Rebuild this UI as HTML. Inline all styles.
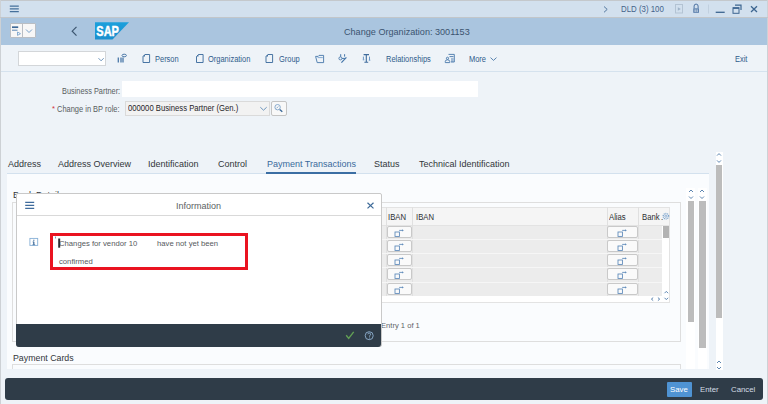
<!DOCTYPE html>
<html><head><meta charset="utf-8">
<style>
*{box-sizing:border-box;margin:0;padding:0}
html,body{width:768px;height:404px;overflow:hidden}
body{position:relative;background:#eef3f8;font-family:"Liberation Sans",sans-serif;color:#32363a}
.a{position:absolute}
.t{position:absolute;white-space:nowrap;line-height:1}
svg{position:absolute;overflow:visible;left:0;top:0}
.tb{font-size:8.3px;color:#2e5b8b;top:54.7px;transform:scaleX(0.9);transform-origin:0 0}
.tab{font-size:9px;top:160px;color:#32363a}
.th{font-size:8.4px;top:212.6px;color:#2a2e32;transform:scaleX(0.92);transform-origin:0 0}
.btn{position:absolute;width:25px;height:12px;background:#fafafa;border:1px solid #c9c9c9;border-radius:2px}
</style></head><body>
<!-- outer borders -->
<div class="a" style="left:0;top:0;width:768px;height:1px;background:#c4c8cc"></div>
<div class="a" style="left:0;top:0;width:1px;height:404px;background:#cdd1d5"></div>
<div class="a" style="right:0;top:0;width:1px;height:404px;background:#cdd1d5"></div>

<!-- top bar -->
<div class="a" style="left:1px;top:1px;width:766px;height:16px;background:#d2e0ee"></div>
<div class="a" style="left:0;top:17px;width:768px;height:1px;background:#c2c6ca"></div>
<div class="t" style="left:621px;top:5.4px;font-size:8.7px;color:#45638a;transform:scaleX(0.905);transform-origin:0 0">DLD (3) 100</div>

<!-- header -->
<div class="a" style="left:1px;top:18px;width:766px;height:27px;background:#aac5df"></div>
<div class="a" style="left:10px;top:23px;width:26px;height:15.3px;background:#f7f7f7;border:1px solid #b9bec4;border-radius:1px"></div>
<div class="a" style="left:22px;top:23px;width:1px;height:15.3px;background:#b9bec4"></div>
<div class="t" style="left:344px;top:27.5px;font-size:9.1px;color:#3b5470">Change Organization: 3001153</div>

<!-- toolbar -->
<div class="a" style="left:1px;top:45px;width:766px;height:27px;background:#eef3f8"></div>
<div class="a" style="left:1px;top:71px;width:766px;height:1px;background:#d5e2ee"></div>
<div class="a" style="left:18px;top:51px;width:88px;height:15px;background:#fff;border:1px solid #d3d6d9"></div>

<div class="t tb" style="left:155px">Person</div>
<div class="t tb" style="left:208px">Organization</div>
<div class="t tb" style="left:279px">Group</div>
<div class="t tb" style="left:386px">Relationships</div>
<div class="t tb" style="left:469px">More</div>
<div class="t tb" style="left:735px">Exit</div>

<!-- form -->
<div class="t" style="left:62px;top:87.7px;font-size:8.2px;color:#585c60;transform:scaleX(0.9);transform-origin:0 0">Business Partner:</div>
<div class="a" style="left:122px;top:81px;width:356px;height:16px;background:#fff"></div>
<div class="t" style="left:52px;top:105.3px;font-size:7.5px;color:#d0303a">*</div>
<div class="t" style="left:57px;top:105.1px;font-size:8.3px;color:#585c60;transform:scaleX(0.9);transform-origin:0 0">Change in BP role:</div>
<div class="a" style="left:125px;top:101px;width:145px;height:14.5px;background:#f2f2f2;border:1px solid #dadada"></div>
<div class="t" style="left:127.5px;top:104.2px;font-size:8.6px;color:#1f2327;transform:scaleX(0.895);transform-origin:0 0">000000 Business Partner (Gen.)</div>
<div class="a" style="left:271px;top:100.5px;width:16px;height:15.5px;background:#f8f8f8;border:1px solid #c4c4c4;border-radius:2px"></div>

<!-- tabs -->
<div class="t tab" style="left:8px">Address</div>
<div class="t tab" style="left:58px">Address Overview</div>
<div class="t tab" style="left:148px">Identification</div>
<div class="t tab" style="left:218px">Control</div>
<div class="t tab" style="left:267px;color:#3a6a9c">Payment Transactions</div>
<div class="t tab" style="left:374px">Status</div>
<div class="t tab" style="left:419px">Technical Identification</div>
<div class="a" style="left:7px;top:173px;width:702px;height:1px;background:#d3e1ee"></div>
<div class="a" style="left:266px;top:172px;width:90px;height:2px;background:#3b6ea3"></div>

<!-- content -->
<div class="a" style="left:7px;top:174px;width:702px;height:195px;background:#fafcfe"></div>
<div class="t" style="left:13px;top:191px;font-size:9px">Bank Details</div>
<div class="a" style="left:12px;top:202px;width:669px;height:140px;border:1px solid #dedede"></div>

<!-- table -->
<div class="a" style="left:381px;top:207px;width:289px;height:95.5px;background:#fff;border:1px solid #e3e3e3"></div>
<div class="a" style="left:381px;top:207px;width:289px;height:19px;background:#f5f5f5;border:1px solid #e3e3e3"></div>
<div class="a" style="left:382px;top:226px;width:280px;height:70px;background:#ececec"></div>
<div class="a" style="left:386px;top:207px;width:1px;height:89px;background:#e0e0e0"></div>
<div class="a" style="left:412px;top:207px;width:1px;height:89px;background:#e0e0e0"></div>
<div class="a" style="left:607px;top:207px;width:1px;height:89px;background:#e0e0e0"></div>
<div class="a" style="left:638px;top:207px;width:1px;height:89px;background:#e0e0e0"></div>
<div class="a" style="left:382px;top:239px;width:280px;height:1px;background:#f6f6f6"></div>
<div class="a" style="left:382px;top:253px;width:280px;height:1px;background:#f6f6f6"></div>
<div class="a" style="left:382px;top:267px;width:280px;height:1px;background:#f6f6f6"></div>
<div class="a" style="left:382px;top:282px;width:280px;height:1px;background:#f6f6f6"></div>
<div class="a" style="left:662px;top:226px;width:7px;height:69px;background:#fff"></div>
<div class="a" style="left:663px;top:226px;width:6px;height:12px;background:#b3b3b3"></div>
<div class="t th" style="left:388px">IBAN</div>
<div class="t th" style="left:416px">IBAN</div>
<div class="t th" style="left:608.5px">Alias</div>
<div class="t th" style="left:642px">Bank</div><div class="t th" style="left:660.6px">.</div>
<div class="btn" style="left:387px;top:226px"></div>
<div class="btn" style="left:607px;top:226px;width:31px"></div>
<div class="btn" style="left:387px;top:240px"></div>
<div class="btn" style="left:607px;top:240px;width:31px"></div>
<div class="btn" style="left:387px;top:254px"></div>
<div class="btn" style="left:607px;top:254px;width:31px"></div>
<div class="btn" style="left:387px;top:268px"></div>
<div class="btn" style="left:607px;top:268px;width:31px"></div>
<div class="btn" style="left:387px;top:283px"></div>
<div class="btn" style="left:607px;top:283px;width:31px"></div>


<div class="t" style="left:381px;top:321.5px;font-size:7.6px;color:#5f6367">Entry 1 of 1</div>
<div class="t" style="left:13px;top:353.7px;font-size:8.8px">Payment Cards</div>
<div class="a" style="left:12px;top:364px;width:669px;height:5px;border-top:1px solid #dedede;border-left:1px solid #dedede;border-right:1px solid #dedede"></div>

<!-- scrollbars -->
<div class="a" style="left:686px;top:188px;width:9px;height:181px;background:#fff"></div>
<div class="a" style="left:698px;top:188px;width:9px;height:181px;background:#fff"></div>
<div class="a" style="left:687.7px;top:201.2px;width:6.5px;height:121px;background:#bcbcbc"></div>
<div class="a" style="left:699px;top:201.2px;width:6.6px;height:147px;background:#bcbcbc"></div>
<div class="a" style="left:716px;top:151.5px;width:6.5px;height:218.5px;background:#fff"></div>
<div class="a" style="left:716px;top:165.2px;width:6.3px;height:153px;background:#bcbcbc"></div>

<!-- dialog -->
<div class="a" style="left:16px;top:193px;width:365.5px;height:154px;background:#fff;border:1px solid #c9c9c9;border-radius:2px"></div>
<div class="a" style="left:17px;top:215px;width:364px;height:1px;background:#d9d9d9"></div>
<div class="t" style="left:176px;top:201.5px;font-size:9px;color:#5b5f63">Information</div>
<div class="a" style="left:50px;top:233px;width:198px;height:36.5px;border:3px solid #ea1320"></div>
<div class="t" style="left:59px;top:240.3px;font-size:7.7px;color:#55595d">Changes for vendor 10</div>
<div class="t" style="left:157px;top:240.3px;font-size:7.7px;color:#55595d">have not yet been</div>
<div class="t" style="left:59px;top:258.3px;font-size:7.7px;color:#55595d">confirmed</div>
<div class="a" style="left:16px;top:324px;width:365.3px;height:22.5px;background:#2f3c48;border-radius:0 0 3px 3px"></div>

<!-- footer -->
<div class="a" style="left:5px;top:378.3px;width:757.7px;height:21.6px;background:#2f3c48;border-radius:3px"></div>
<div class="a" style="left:667px;top:382px;width:25px;height:15px;background:#4f93d3;border-radius:1px"></div>
<div class="t" style="left:670px;top:386px;font-size:7.8px;color:#fff">Save</div>
<div class="t" style="left:700px;top:386px;font-size:7.8px;color:#d5dde5">Enter</div>
<div class="t" style="left:731px;top:386px;font-size:7.8px;color:#d5dde5">Cancel</div>

<!-- icons -->
<svg width="768" height="404" viewBox="0 0 768 404">
 <g fill="none" stroke-linecap="butt">
  <!-- hamburger top -->
  <path d="M9.8 6.1h9M9.8 8.9h9M9.8 11.7h9" stroke="#46709b" stroke-width="1.25"/>
  <!-- header left icon -->
  <path d="M12 27.2h6.2" stroke="#3f6a98" stroke-width="1.7"/><path d="M12 30.2h5.5" stroke="#5a86b3" stroke-width="1"/>
  <path d="M17.5 32l3 1.7-3 1.7z" stroke="#6d9ac8" stroke-width="0.8"/>
  <path d="M26 29.5l3 3 3-3" stroke="#6a95c2" stroke-width="0.9"/>
  <!-- back arrow -->
  <path d="M76.5 26.8l-4.3 4.4 4.3 4.4" stroke="#3c5670" stroke-width="1.2"/>
  <!-- chevron > top -->
  <path d="M604 6.5l3.2 2.9-3.2 2.9" stroke="#5579a0" stroke-width="1"/>
  <!-- play box -->
  <rect x="675.5" y="4.5" width="7" height="8.5" stroke="#b3c3d3" stroke-width="1"/>
  <path d="M677.8 7.3l3 1.7-3 1.7z" fill="#9fb3c8" stroke="none"/>
  <!-- lock -->
  <path d="M694.1 8.5v-2.4a2 2 0 0 1 4 0v2.4" stroke="#4a70a0" stroke-width="1"/>
  <rect x="693.3" y="8.4" width="5.6" height="4.4" fill="#4f76a6"/>
  <path d="M695.1 9.3v2.8M697.1 9.3v2.8" stroke="#f2f6fa" stroke-width="0.9"/>
  <path d="M708.5 4.5v9" stroke="#bccbda" stroke-width="0.8"/>
  <!-- minimize -->
  <path d="M715.7 12.3h9" stroke="#3d6590" stroke-width="1.3"/>
  <!-- restore -->
  <path d="M735 5.2h6v4.8" stroke="#3d6590" stroke-width="1.2"/>
  <rect x="733" y="7.7" width="6" height="5.6" stroke="#3d6590" stroke-width="1"/>
  <path d="M733 8.2h6" stroke="#3d6590" stroke-width="1.4"/>
  <!-- close -->
  <path d="M751 6.2l6 5.8M757 6.2l-6 5.8" stroke="#3d6590" stroke-width="1.3"/>

  <!-- dropdown chevron -->
  <path d="M98.5 58.2l2.6 2.6 2.6-2.6" stroke="#5f8ab5" stroke-width="0.9"/>
  <!-- toolbar icon1 -->
  <path d="M118.3 57.5v5M121 57.5v5M123 57.5v5" stroke="#4b78a8" stroke-width="1.3"/>
  <ellipse cx="124.2" cy="55.5" rx="2.2" ry="1.3" stroke="#4b78a8" stroke-width="1"/>
  <!-- doc icons -->
  <path d="M145 54.5h4.6v8h-6.6v-6z" stroke="#3f6e9f" stroke-width="0.95"/><path d="M142.8 56.5l2.2-2.2v2.2z" fill="#3f6e9f"/>
  <path d="M198.5 54.5h4.6v8h-6.6v-6z" stroke="#3f6e9f" stroke-width="0.95"/><path d="M196.3 56.5l2.2-2.2v2.2z" fill="#3f6e9f"/>
  <path d="M268 54.5h4.6v8h-6.6v-6z" stroke="#3f6e9f" stroke-width="0.95"/><path d="M265.8 56.5l2.2-2.2v2.2z" fill="#3f6e9f"/>
  <!-- folder -->
  <path d="M315.6 56.4h2.6l0.8-1h4.6v7.2h-6.4z" stroke="#4677aa" stroke-width="0.9"/>
  <path d="M317.6 57.6h5.2" stroke="#6a98c8" stroke-width="0.8"/>
  <!-- wrench-ish -->
  <circle cx="340.4" cy="58.4" r="1.5" stroke="#4677aa" stroke-width="0.9"/>
  <path d="M340.7 54.2v2.6M344.6 54.2v2.4M342 58.4h3.2" stroke="#4677aa" stroke-width="1"/>
  <path d="M346.4 57.4l-5 5.2" stroke="#4677aa" stroke-width="1.2"/>
  <!-- scale -->
  <path d="M366.3 54.4v7.8M363.6 54.6h5.4M364.4 62.2h3.8" stroke="#3f6b9c" stroke-width="1.1"/>
  <path d="M363.4 56.6v3M369.5 56.6v3.4M362.8 59.8h1.5M368.8 60.2h1.5" stroke="#6a98c8" stroke-width="1"/>
  <!-- relationships icon -->
  <path d="M448.5 54.4h5.8v7.6h-3.4" stroke="#4677aa" stroke-width="0.9"/>
  <path d="M449.5 56.6h4M451 59h2.6M451 61h2.6" stroke="#4677aa" stroke-width="0.9"/>
  <circle cx="447.5" cy="58.3" r="1.1" stroke="#4677aa" stroke-width="0.9"/>
  <path d="M445.3 62.6v-1.2a2.2 1.6 0 0 1 4.4 0v1.2z" stroke="#4677aa" stroke-width="0.9"/>
  <!-- more chevron -->
  <path d="M490.5 57.6l3 2.8 3-2.8" stroke="#4b78a8" stroke-width="0.9"/>

  <!-- select chevron -->
  <path d="M260.3 107.2l3.2 3 3.2-3" stroke="#5f8ab5" stroke-width="0.9"/>
  <!-- magnifier -->
  <circle cx="277.6" cy="107.2" r="2.7" stroke="#7da3c9" stroke-width="0.9"/><path d="M276.5 108.3l1.8-1.8" stroke="#5a86b3" stroke-width="0.7"/>
  <path d="M279.7 109.4l2.6 2.4" stroke="#3a6898" stroke-width="1.3"/>

  <!-- dialog hamburger -->
  <path d="M25.2 202.4h9M25.2 205.4h9M25.2 208.4h9" stroke="#3f6b9c" stroke-width="1.1"/>
  <!-- dialog close -->
  <path d="M367.5 202.8l6 5.6M373.5 202.8l-6 5.6" stroke="#3d6a98" stroke-width="1.2"/>
  <!-- info icon -->
  <rect x="29.9" y="238.4" width="7.8" height="7" stroke="#86afd6" stroke-width="0.9"/>
  <path d="M33.8 239.8v1M33.8 241.8v3" stroke="#3a6898" stroke-width="1.2"/><path d="M32.6 241.9h1.4M32.5 244.7h2.6" stroke="#3a6898" stroke-width="0.7"/>
  <!-- cursor -->
  <path d="M59.2 238.5v9.2" stroke="#2a2e33" stroke-width="2"/><path d="M55.5 236.5v2" stroke="#5a86b3" stroke-width="0.8"/>
  <!-- check -->
  <path d="M346.2 335.2l2.5 3.2 5-6.6" stroke="#62a055" stroke-width="1.4"/>
  <!-- help -->
  <circle cx="369.2" cy="335.7" r="4" stroke="#8fb0d0" stroke-width="0.9"/>
  <path d="M367.9 334.3a1.35 1.35 0 1 1 1.7 1.4v1" stroke="#8fb0d0" stroke-width="0.9"/>
  <path d="M369.5 337.6v0.9" stroke="#8fb0d0" stroke-width="0.9"/>

  <rect x="395.0" y="232.0" width="4.4" height="4.4" stroke="#5a87b8" stroke-width="0.85"/>
<path d="M399.2 230.4h3.2" stroke="#4f7fb3" stroke-width="0.8"/><path d="M402.2 229.2l1.5 1.2-1.5 1.2z" fill="#4f7fb3"/>
<rect x="618.0" y="232.0" width="4.4" height="4.4" stroke="#5a87b8" stroke-width="0.85"/>
<path d="M622.2 230.4h3.2" stroke="#4f7fb3" stroke-width="0.8"/><path d="M625.2 229.2l1.5 1.2-1.5 1.2z" fill="#4f7fb3"/>
<rect x="395.0" y="246.0" width="4.4" height="4.4" stroke="#5a87b8" stroke-width="0.85"/>
<path d="M399.2 244.4h3.2" stroke="#4f7fb3" stroke-width="0.8"/><path d="M402.2 243.2l1.5 1.2-1.5 1.2z" fill="#4f7fb3"/>
<rect x="618.0" y="246.0" width="4.4" height="4.4" stroke="#5a87b8" stroke-width="0.85"/>
<path d="M622.2 244.4h3.2" stroke="#4f7fb3" stroke-width="0.8"/><path d="M625.2 243.2l1.5 1.2-1.5 1.2z" fill="#4f7fb3"/>
<rect x="395.0" y="260.0" width="4.4" height="4.4" stroke="#5a87b8" stroke-width="0.85"/>
<path d="M399.2 258.4h3.2" stroke="#4f7fb3" stroke-width="0.8"/><path d="M402.2 257.2l1.5 1.2-1.5 1.2z" fill="#4f7fb3"/>
<rect x="618.0" y="260.0" width="4.4" height="4.4" stroke="#5a87b8" stroke-width="0.85"/>
<path d="M622.2 258.4h3.2" stroke="#4f7fb3" stroke-width="0.8"/><path d="M625.2 257.2l1.5 1.2-1.5 1.2z" fill="#4f7fb3"/>
<rect x="395.0" y="274.0" width="4.4" height="4.4" stroke="#5a87b8" stroke-width="0.85"/>
<path d="M399.2 272.4h3.2" stroke="#4f7fb3" stroke-width="0.8"/><path d="M402.2 271.2l1.5 1.2-1.5 1.2z" fill="#4f7fb3"/>
<rect x="618.0" y="274.0" width="4.4" height="4.4" stroke="#5a87b8" stroke-width="0.85"/>
<path d="M622.2 272.4h3.2" stroke="#4f7fb3" stroke-width="0.8"/><path d="M625.2 271.2l1.5 1.2-1.5 1.2z" fill="#4f7fb3"/>
<rect x="395.0" y="289.0" width="4.4" height="4.4" stroke="#5a87b8" stroke-width="0.85"/>
<path d="M399.2 287.4h3.2" stroke="#4f7fb3" stroke-width="0.8"/><path d="M402.2 286.2l1.5 1.2-1.5 1.2z" fill="#4f7fb3"/>
<rect x="618.0" y="289.0" width="4.4" height="4.4" stroke="#5a87b8" stroke-width="0.85"/>
<path d="M622.2 287.4h3.2" stroke="#4f7fb3" stroke-width="0.8"/><path d="M625.2 286.2l1.5 1.2-1.5 1.2z" fill="#4f7fb3"/>
<!-- table small scroll arrows -->
  <path d="M653.2 297.6l-1.8 1.5 1.8 1.5M657.9 297.6l1.8 1.5-1.8 1.5" stroke="#4b78a8" stroke-width="0.9"/>
  <path d="M664.5 293.2l1.8-1.8 1.8 1.8M664.5 297.8l1.8 1.8 1.8-1.8" stroke="#4b78a8" stroke-width="0.9"/>
  <!-- gear -->
  <circle cx="665.9" cy="216.2" r="2.7" stroke="#7aa3cc" stroke-width="1.3" stroke-dasharray="1 0.7"/>
  <circle cx="665.9" cy="216.2" r="1.1" stroke="#6a98c8" stroke-width="0.7"/>
  <!-- big scroll arrows -->
  <path d="M689 192l2 -2 2 2M689 196.5l2 2 2-2M700 192l2 -2 2 2M700 196.5l2 2 2-2" stroke="#4b78a8" stroke-width="0.9"/>
  <path d="M717 155.6l2 -2 2 2M717 160.4l2 2 2-2" stroke="#4b78a8" stroke-width="0.9"/>
  <path d="M717 363l2 -2 2 2M717 367l2 2 2-2" stroke="#4b78a8" stroke-width="0.9"/>
 </g>
 <!-- SAP logo -->
 <defs><linearGradient id="sg" x1="0" y1="0" x2="0" y2="1"><stop offset="0" stop-color="#1ca0dc"/><stop offset="1" stop-color="#1a8fce"/></linearGradient></defs>
 <path d="M95 22.2h34l-16.5 17.3h-17.5z" fill="url(#sg)"/>
 <text x="96.3" y="35.5" style="font-family:'Liberation Sans';font-weight:700;font-size:14.4px" fill="#fff" stroke="#fff" stroke-width="0.45" textLength="22.6" lengthAdjust="spacingAndGlyphs">SAP</text>
</svg>

</body></html>
